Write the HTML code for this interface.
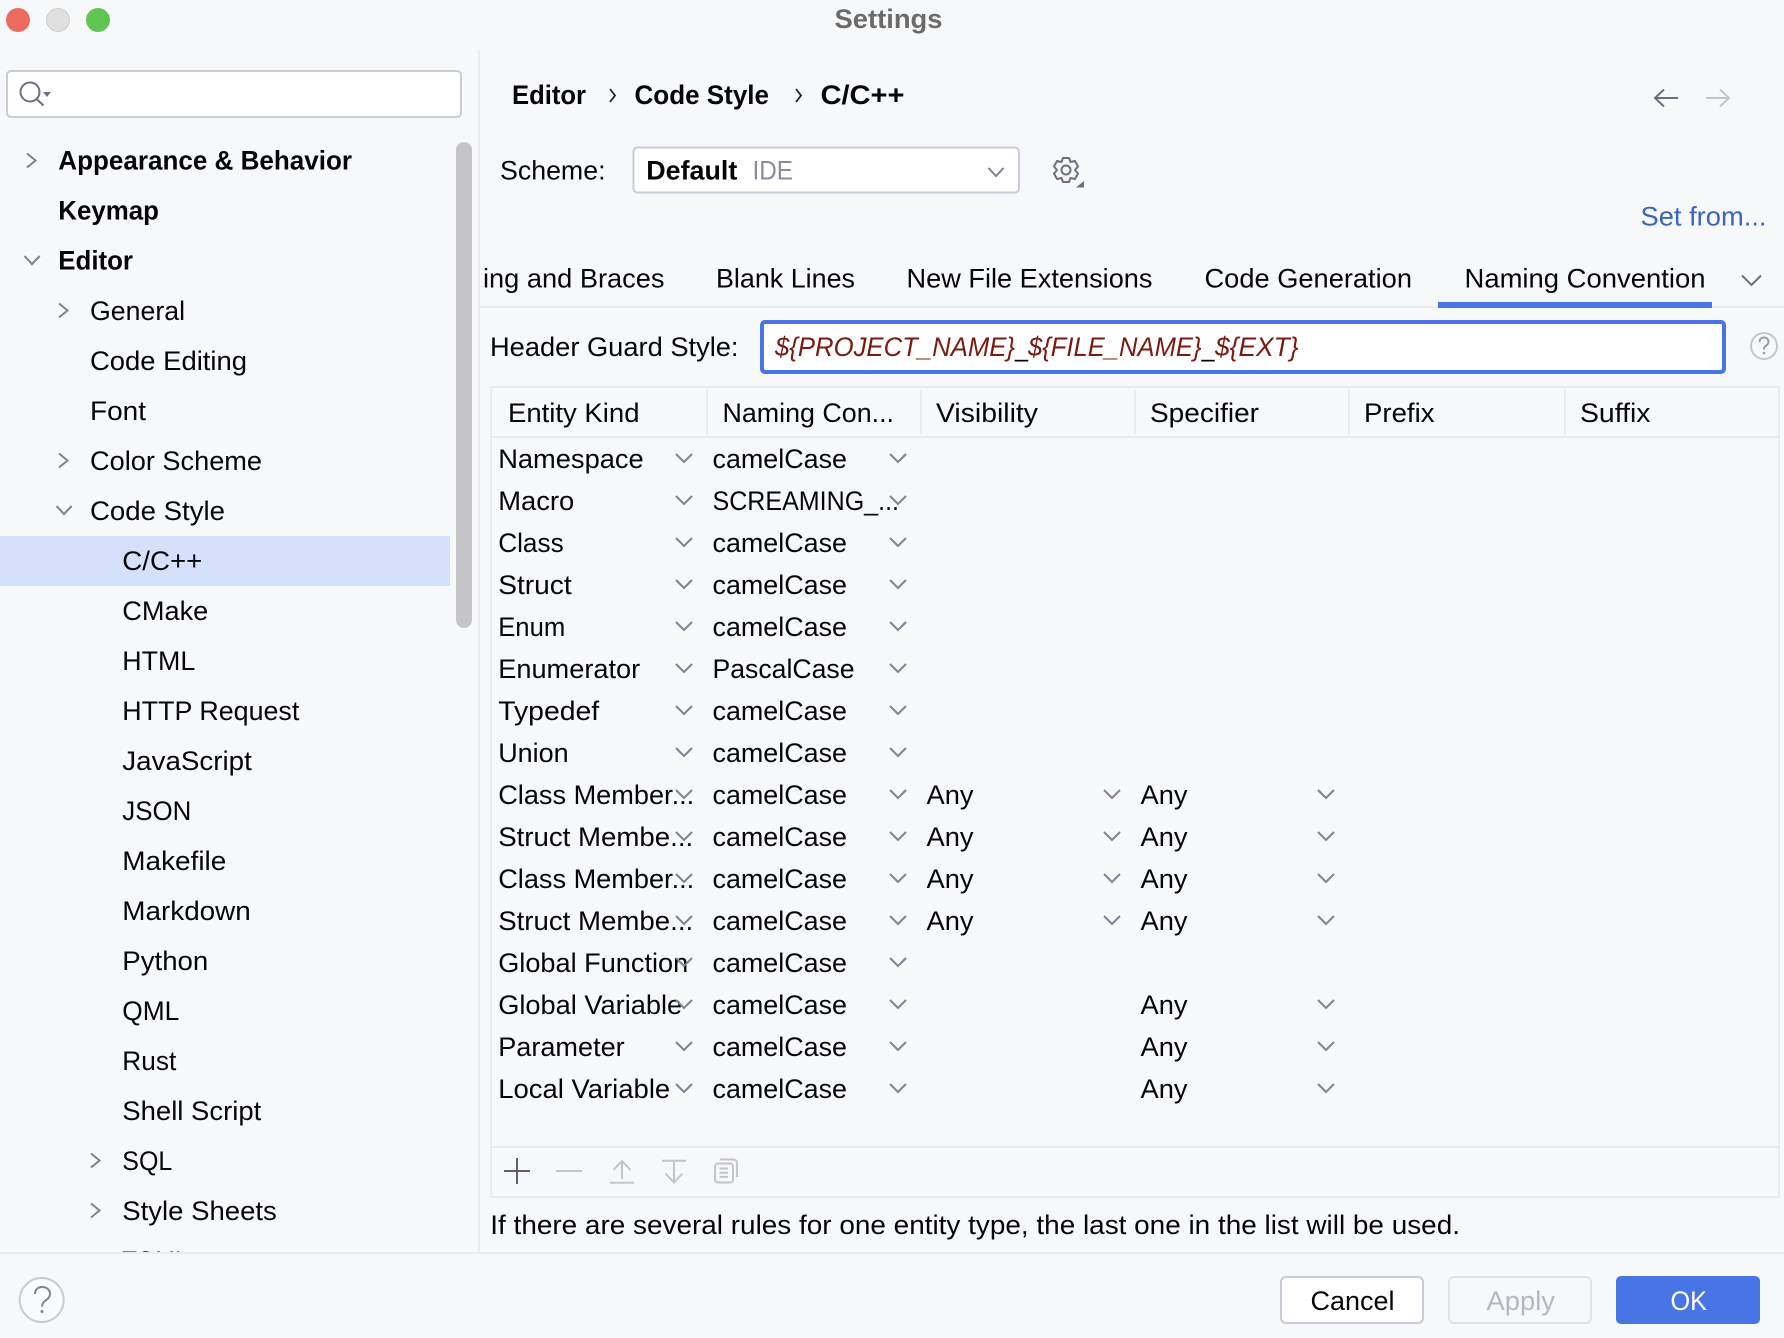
<!DOCTYPE html>
<html><head><meta charset="utf-8"><title>Settings</title>
<style>
html,body{margin:0;padding:0;background:#f7f8fa;width:1784px;height:1338px;overflow:hidden}
svg{display:block}
text{font-family:"Liberation Sans",sans-serif;font-size:26.5px;fill:#060608}
.b{font-weight:700}
.c{fill:none;stroke:#7f8292;stroke-width:2}
.d{fill:none;stroke:#c4c5c9;stroke-width:2}
.k{fill:none;stroke:#6c707e;stroke-width:2}
.h{fill:#7a1a10;font-style:italic}
.l{fill:#ebecf0}
</style></head><body>
<svg width="1784" height="1338" viewBox="0 0 1784 1338" xmlns="http://www.w3.org/2000/svg">
<defs>
<clipPath id="side"><rect x="0" y="120" width="478" height="1132"/></clipPath>
<clipPath id="tab"><rect x="484" y="250" width="1300" height="60"/></clipPath>
</defs>
<rect width="1784" height="1338" fill="#f7f8fa"/>

<!-- traffic lights -->
<circle cx="18" cy="20" r="12" fill="#ed6a5e"/>
<circle cx="58" cy="20" r="11.5" fill="#e0e0e0" stroke="#cfcfcf"/>
<circle cx="98" cy="20" r="12" fill="#61c554"/>
<text x="834.5" y="28" class="b" textLength="108" lengthAdjust="spacingAndGlyphs" style="fill:#6b6b6b">Settings</text>

<!-- separators -->
<rect x="478" y="50" width="2" height="1202" class="l"/>
<rect x="0" y="1252" width="1784" height="2" class="l"/>
<rect x="480" y="306" width="1304" height="2" class="l"/>

<!-- search -->
<rect x="7" y="71" width="454" height="46" rx="4" fill="#fff" stroke="#c9ccd6" stroke-width="2"/>
<circle cx="30" cy="92" r="9.5" fill="none" stroke="#6c707e" stroke-width="2"/>
<path d="M36.5,99 L43.5,105.5" class="k"/>
<path d="M43,92 h8 l-4,5 z" fill="#6c707e"/>

<!-- sidebar -->
<rect x="0" y="536" width="450" height="50" fill="#d5e1fa"/>
<rect x="456" y="142" width="16" height="486" rx="8" fill="#c5c5c7"/>
<g clip-path="url(#side)">
<text x="58.3" y="169.7" class="b" textLength="293.7" lengthAdjust="spacingAndGlyphs">Appearance &amp; Behavior</text>
<text x="58.3" y="219.7" class="b" textLength="100.7" lengthAdjust="spacingAndGlyphs">Keymap</text>
<text x="58.3" y="269.7" class="b" textLength="74.7" lengthAdjust="spacingAndGlyphs">Editor</text>
<text x="90" y="320" textLength="95" lengthAdjust="spacingAndGlyphs">General</text>
<text x="90" y="370" textLength="157" lengthAdjust="spacingAndGlyphs">Code Editing</text>
<text x="90" y="420" textLength="56" lengthAdjust="spacingAndGlyphs">Font</text>
<text x="90" y="470" textLength="172" lengthAdjust="spacingAndGlyphs">Color Scheme</text>
<text x="90" y="520" textLength="135" lengthAdjust="spacingAndGlyphs">Code Style</text>
<text x="122.3" y="570" textLength="80" lengthAdjust="spacingAndGlyphs">C/C++</text>
<text x="122.3" y="620" textLength="86" lengthAdjust="spacingAndGlyphs">CMake</text>
<text x="122.3" y="670" textLength="73" lengthAdjust="spacingAndGlyphs">HTML</text>
<text x="122.3" y="720" textLength="177" lengthAdjust="spacingAndGlyphs">HTTP Request</text>
<text x="122.3" y="770" textLength="129.5" lengthAdjust="spacingAndGlyphs">JavaScript</text>
<text x="122.3" y="820" textLength="69" lengthAdjust="spacingAndGlyphs">JSON</text>
<text x="122.3" y="870" textLength="104" lengthAdjust="spacingAndGlyphs">Makefile</text>
<text x="122.3" y="920" textLength="128.5" lengthAdjust="spacingAndGlyphs">Markdown</text>
<text x="122.3" y="970" textLength="86" lengthAdjust="spacingAndGlyphs">Python</text>
<text x="122.3" y="1020" textLength="57" lengthAdjust="spacingAndGlyphs">QML</text>
<text x="122.3" y="1070" textLength="54" lengthAdjust="spacingAndGlyphs">Rust</text>
<text x="122.3" y="1120" textLength="139" lengthAdjust="spacingAndGlyphs">Shell Script</text>
<text x="122.3" y="1170" textLength="50" lengthAdjust="spacingAndGlyphs">SQL</text>
<text x="122.3" y="1220" textLength="154.5" lengthAdjust="spacingAndGlyphs">Style Sheets</text>
<text x="122.3" y="1270" textLength="66" lengthAdjust="spacingAndGlyphs">TOML</text>
</g>
<path class="c" d="M27,153.5 L35.5,160.5 L27,167.5"/>
<path class="c" d="M24.5,256 L32,264 L39.7,256"/>
<path class="c" d="M59,303.5 L67.5,310.5 L59,317.5"/>
<path class="c" d="M59,453.5 L67.5,460.5 L59,467.5"/>
<path class="c" d="M56.5,506 L64,514 L71.7,506"/>
<path class="c" d="M91,1153.5 L99.5,1160.5 L91,1167.5"/>
<path class="c" d="M91,1203.5 L99.5,1210.5 L91,1217.5"/>

<!-- breadcrumbs -->
<text x="512" y="104" class="b" textLength="74" lengthAdjust="spacingAndGlyphs">Editor</text>
<path d="M610,89 L615,95.5 L610,102" fill="none" stroke="#222" stroke-width="1.8"/>
<text x="634.5" y="104" class="b" textLength="134.5" lengthAdjust="spacingAndGlyphs">Code Style</text>
<path d="M796,89 L801,95.5 L796,102" fill="none" stroke="#222" stroke-width="1.8"/>
<text x="820.5" y="104" class="b" textLength="84" lengthAdjust="spacingAndGlyphs">C/C++</text>
<path class="k" d="M1664,89.5 L1655,98 L1664,106.5 M1655,98 H1678"/>
<path class="d" d="M1720,89.5 L1729,98 L1720,106.5 M1729,98 H1706"/>

<!-- scheme -->
<text x="500" y="179.5" textLength="105.5" lengthAdjust="spacingAndGlyphs">Scheme:</text>
<rect x="633.5" y="147.5" width="385.5" height="45" rx="4" fill="#fff" stroke="#c9ccd6" stroke-width="2"/>
<text x="646.3" y="179.5" class="b" textLength="91" lengthAdjust="spacingAndGlyphs">Default</text>
<text x="752.5" y="179.5" textLength="40.5" lengthAdjust="spacingAndGlyphs" style="fill:#8a8d99">IDE</text>
<path class="c" d="M988.5,168 L996,176 L1003.5,168"/>
<path d="M1063,158 h6 l1.5,4 4.5,-1 3,5.5 -3,3.5 3,3.5 -3,5.5 -4.5,-1 -1.5,4 h-6 l-1.5,-4 -4.5,1 -3,-5.5 3,-3.5 -3,-3.5 3,-5.5 4.5,1 z" fill="none" stroke="#6c707e" stroke-width="2" stroke-linejoin="round"/>
<circle cx="1066" cy="170" r="4.5" fill="none" stroke="#6c707e" stroke-width="2"/>
<path d="M1076,187.5 H1084 V181 z" fill="#6c707e"/>
<text x="1640.5" y="225.5" textLength="126" lengthAdjust="spacingAndGlyphs" style="fill:#3b63c2">Set from...</text>

<!-- tabs -->
<g clip-path="url(#tab)">
<text x="483" y="287.5" textLength="181.5" lengthAdjust="spacingAndGlyphs">ing and Braces</text>
<text x="716" y="287.5" textLength="139" lengthAdjust="spacingAndGlyphs">Blank Lines</text>
<text x="906.5" y="287.5" textLength="246" lengthAdjust="spacingAndGlyphs">New File Extensions</text>
<text x="1204.5" y="287.5" textLength="207.5" lengthAdjust="spacingAndGlyphs">Code Generation</text>
<text x="1464.5" y="287.5" textLength="241" lengthAdjust="spacingAndGlyphs">Naming Convention</text>
</g>
<rect x="1438" y="302" width="274" height="6" fill="#4775e6"/>
<path class="k" d="M1742,275.5 L1751.5,285 L1761,275.5"/>

<!-- header guard -->
<text x="490" y="356" textLength="248.5" lengthAdjust="spacingAndGlyphs">Header Guard Style:</text>
<rect x="762" y="322" width="962" height="50" rx="3" fill="#fff" stroke="#4775e6" stroke-width="4"/>
<text x="775" y="356" class="h" textLength="240" lengthAdjust="spacingAndGlyphs">${PROJECT_NAME}</text>
<text x="1015" y="356" textLength="13" lengthAdjust="spacingAndGlyphs">_</text>
<text x="1028" y="356" class="h" textLength="173.5" lengthAdjust="spacingAndGlyphs">${FILE_NAME}</text>
<text x="1201.5" y="356" textLength="13" lengthAdjust="spacingAndGlyphs">_</text>
<text x="1215" y="356" class="h" textLength="83.5" lengthAdjust="spacingAndGlyphs">${EXT}</text>
<circle cx="1764" cy="346" r="13" fill="none" stroke="#c4c7cc" stroke-width="2"/>
<path d="M1759.5,342 C1759.5,339 1761.5,337.5 1764,337.5 C1767,337.5 1768.5,339.5 1768.5,342 C1768.5,344.5 1766.5,345 1765,346.5 C1764.2,347.3 1764,348 1764,349.5" fill="none" stroke="#9a9da8" stroke-width="2"/>
<circle cx="1764" cy="353" r="1.3" fill="#9a9da8"/>

<!-- table frame -->
<rect x="491" y="387" width="1288" height="810" fill="none" stroke="#ebecf0" stroke-width="2"/>
<rect x="492" y="436" width="1287" height="2" class="l"/>
<rect x="492" y="1146" width="1287" height="2" class="l"/>
<rect x="706" y="390" width="2" height="44" class="l"/>
<rect x="920" y="390" width="2" height="44" class="l"/>
<rect x="1134" y="390" width="2" height="44" class="l"/>
<rect x="1348" y="390" width="2" height="44" class="l"/>
<rect x="1564" y="390" width="2" height="44" class="l"/>
<text x="508" y="422" textLength="131.5" lengthAdjust="spacingAndGlyphs">Entity Kind</text>
<text x="722.5" y="422" textLength="171.5" lengthAdjust="spacingAndGlyphs">Naming Con...</text>
<text x="936" y="422" textLength="102" lengthAdjust="spacingAndGlyphs">Visibility</text>
<text x="1150" y="422" textLength="109" lengthAdjust="spacingAndGlyphs">Specifier</text>
<text x="1364" y="422" textLength="70.5" lengthAdjust="spacingAndGlyphs">Prefix</text>
<text x="1580" y="422" textLength="70.5" lengthAdjust="spacingAndGlyphs">Suffix</text>

<!-- rows: entity -->
<g transform="translate(-0.8,0.4)">
<text x="499" y="467.5" textLength="145.5" lengthAdjust="spacingAndGlyphs">Namespace</text>
<text x="499" y="509.5" textLength="76" lengthAdjust="spacingAndGlyphs">Macro</text>
<text x="499" y="551.5" textLength="65.5" lengthAdjust="spacingAndGlyphs">Class</text>
<text x="499" y="593.5" textLength="73.5" lengthAdjust="spacingAndGlyphs">Struct</text>
<text x="499" y="635.5" textLength="67" lengthAdjust="spacingAndGlyphs">Enum</text>
<text x="499" y="677.5" textLength="142" lengthAdjust="spacingAndGlyphs">Enumerator</text>
<text x="499" y="719.5" textLength="101" lengthAdjust="spacingAndGlyphs">Typedef</text>
<text x="499" y="761.5" textLength="70.5" lengthAdjust="spacingAndGlyphs">Union</text>
<text x="499" y="803.5" textLength="196" lengthAdjust="spacingAndGlyphs">Class Member...</text>
<text x="499" y="845.5" textLength="195" lengthAdjust="spacingAndGlyphs">Struct Membe...</text>
<text x="499" y="887.5" textLength="196" lengthAdjust="spacingAndGlyphs">Class Member...</text>
<text x="499" y="929.5" textLength="195" lengthAdjust="spacingAndGlyphs">Struct Membe...</text>
<text x="499" y="971.5" textLength="190" lengthAdjust="spacingAndGlyphs">Global Function</text>
<text x="499" y="1013.5" textLength="184" lengthAdjust="spacingAndGlyphs">Global Variable</text>
<text x="499" y="1055.5" textLength="126.5" lengthAdjust="spacingAndGlyphs">Parameter</text>
<text x="499" y="1097.5" textLength="172" lengthAdjust="spacingAndGlyphs">Local Variable</text>
</g>

<!-- rows: naming -->
<g transform="translate(0,0.4)">
<text x="712.5" y="467.5" textLength="134.5" lengthAdjust="spacingAndGlyphs">camelCase</text>
<text x="712.5" y="509.5" textLength="186.5" lengthAdjust="spacingAndGlyphs">SCREAMING_...</text>
<text x="712.5" y="551.5" textLength="134.5" lengthAdjust="spacingAndGlyphs">camelCase</text>
<text x="712.5" y="593.5" textLength="134.5" lengthAdjust="spacingAndGlyphs">camelCase</text>
<text x="712.5" y="635.5" textLength="134.5" lengthAdjust="spacingAndGlyphs">camelCase</text>
<text x="712.5" y="677.5" textLength="142" lengthAdjust="spacingAndGlyphs">PascalCase</text>
<text x="712.5" y="719.5" textLength="134.5" lengthAdjust="spacingAndGlyphs">camelCase</text>
<text x="712.5" y="761.5" textLength="134.5" lengthAdjust="spacingAndGlyphs">camelCase</text>
<text x="712.5" y="803.5" textLength="134.5" lengthAdjust="spacingAndGlyphs">camelCase</text>
<text x="712.5" y="845.5" textLength="134.5" lengthAdjust="spacingAndGlyphs">camelCase</text>
<text x="712.5" y="887.5" textLength="134.5" lengthAdjust="spacingAndGlyphs">camelCase</text>
<text x="712.5" y="929.5" textLength="134.5" lengthAdjust="spacingAndGlyphs">camelCase</text>
<text x="712.5" y="971.5" textLength="134.5" lengthAdjust="spacingAndGlyphs">camelCase</text>
<text x="712.5" y="1013.5" textLength="134.5" lengthAdjust="spacingAndGlyphs">camelCase</text>
<text x="712.5" y="1055.5" textLength="134.5" lengthAdjust="spacingAndGlyphs">camelCase</text>
<text x="712.5" y="1097.5" textLength="134.5" lengthAdjust="spacingAndGlyphs">camelCase</text>
</g>

<!-- rows: any -->
<g transform="translate(0,0.4)">
<text x="926.5" y="803.5" textLength="47" lengthAdjust="spacingAndGlyphs">Any</text>
<text x="926.5" y="845.5" textLength="47" lengthAdjust="spacingAndGlyphs">Any</text>
<text x="926.5" y="887.5" textLength="47" lengthAdjust="spacingAndGlyphs">Any</text>
<text x="926.5" y="929.5" textLength="47" lengthAdjust="spacingAndGlyphs">Any</text>
<text x="1140.5" y="803.5" textLength="47" lengthAdjust="spacingAndGlyphs">Any</text>
<text x="1140.5" y="845.5" textLength="47" lengthAdjust="spacingAndGlyphs">Any</text>
<text x="1140.5" y="887.5" textLength="47" lengthAdjust="spacingAndGlyphs">Any</text>
<text x="1140.5" y="929.5" textLength="47" lengthAdjust="spacingAndGlyphs">Any</text>
<text x="1140.5" y="1013.5" textLength="47" lengthAdjust="spacingAndGlyphs">Any</text>
<text x="1140.5" y="1055.5" textLength="47" lengthAdjust="spacingAndGlyphs">Any</text>
<text x="1140.5" y="1097.5" textLength="47" lengthAdjust="spacingAndGlyphs">Any</text>
</g>

<!-- row chevrons -->
<path class="c" d="M676,454 l8,8 l8,-8 M890,454 l8,8 l8,-8 M676,496 l8,8 l8,-8 M890,496 l8,8 l8,-8 M676,538 l8,8 l8,-8 M890,538 l8,8 l8,-8 M676,580 l8,8 l8,-8 M890,580 l8,8 l8,-8 M676,622 l8,8 l8,-8 M890,622 l8,8 l8,-8 M676,664 l8,8 l8,-8 M890,664 l8,8 l8,-8 M676,706 l8,8 l8,-8 M890,706 l8,8 l8,-8 M676,748 l8,8 l8,-8 M890,748 l8,8 l8,-8 M676,790 l8,8 l8,-8 M890,790 l8,8 l8,-8 M1104,790 l8,8 l8,-8 M1318,790 l8,8 l8,-8 M676,832 l8,8 l8,-8 M890,832 l8,8 l8,-8 M1104,832 l8,8 l8,-8 M1318,832 l8,8 l8,-8 M676,874 l8,8 l8,-8 M890,874 l8,8 l8,-8 M1104,874 l8,8 l8,-8 M1318,874 l8,8 l8,-8 M676,916 l8,8 l8,-8 M890,916 l8,8 l8,-8 M1104,916 l8,8 l8,-8 M1318,916 l8,8 l8,-8 M676,958 l8,8 l8,-8 M890,958 l8,8 l8,-8 M676,1000 l8,8 l8,-8 M890,1000 l8,8 l8,-8 M1318,1000 l8,8 l8,-8 M676,1042 l8,8 l8,-8 M890,1042 l8,8 l8,-8 M1318,1042 l8,8 l8,-8 M676,1084 l8,8 l8,-8 M890,1084 l8,8 l8,-8 M1318,1084 l8,8 l8,-8"/>

<!-- toolbar -->
<path d="M504,1171 H530 M517,1158 V1184" fill="none" stroke="#5c6070" stroke-width="2"/>
<path class="d" d="M556,1171 H582"/>
<path class="d" d="M610,1182.7 H634 M622,1161 V1179 M613.5,1170 L622,1161 L630.5,1170"/>
<path class="d" d="M662,1160.7 H686 M674,1161 V1182 M665.5,1173.5 L674,1182.5 L682.5,1173.5"/>
<rect x="715" y="1163.5" width="18" height="19" rx="3" class="d"/>
<path class="d" d="M720,1159.5 H733 Q737,1159.5 737,1163.5 V1177"/>
<path class="d" d="M719.5,1168.5 H728 M719.5,1172.7 H728 M719.5,1176.9 H728"/>

<text x="490.3" y="1234" textLength="969.7" lengthAdjust="spacingAndGlyphs">If there are several rules for one entity type, the last one in the list will be used.</text>

<!-- footer -->
<circle cx="41.7" cy="1300" r="22" fill="#fafbfc" stroke="#c9ccd6" stroke-width="2"/>
<path d="M35,1294 C35,1289.5 38,1287 42,1287 C47,1287 50,1290 50,1294 C50,1298 47,1299 45,1301 C43,1302.5 42,1304 42,1306.5" fill="none" stroke="#7f8292" stroke-width="2"/>
<circle cx="42" cy="1311.5" r="1.5" fill="#7f8292"/>
<rect x="1281" y="1277" width="142" height="46" rx="5" fill="#fff" stroke="#c9ccd6" stroke-width="2"/>
<text x="1310.5" y="1310" textLength="84" lengthAdjust="spacingAndGlyphs">Cancel</text>
<rect x="1449" y="1277" width="142" height="46" rx="5" fill="#f7f8fa" stroke="#e1e3ea" stroke-width="2"/>
<text x="1486.5" y="1310" textLength="68.5" lengthAdjust="spacingAndGlyphs" style="fill:#b4b8c6">Apply</text>
<rect x="1616" y="1276" width="144" height="48" rx="5" fill="#4775e6"/>
<text x="1670.5" y="1310" textLength="36.5" lengthAdjust="spacingAndGlyphs" style="fill:#fff">OK</text>
</svg>
</body></html>
